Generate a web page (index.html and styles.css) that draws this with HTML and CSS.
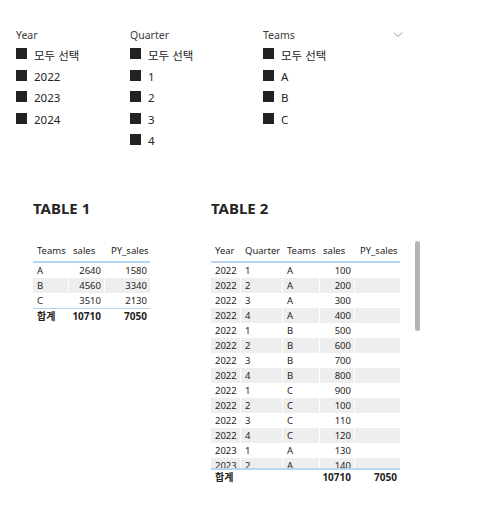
FILE: index.html
```html
<!DOCTYPE HTML>
<html lang="ko">
<head>
    <meta charset="UTF-8">
    <title>report</title>
    <link rel="stylesheet" href="styles.css">
</head>
<body>

<div class="slicers">
    <div class="slicer slicerYear">
        <div class="slicerHead">Year</div>
        <div class="slicerItem"><b></b>모두 선택</div>
        <div class="slicerItem"><b></b>2022</div>
        <div class="slicerItem"><b></b>2023</div>
        <div class="slicerItem"><b></b>2024</div>
    </div>
    <div class="slicer slicerQuarter">
        <div class="slicerHead">Quarter</div>
        <div class="slicerItem"><b></b>모두 선택</div>
        <div class="slicerItem"><b></b>1</div>
        <div class="slicerItem"><b></b>2</div>
        <div class="slicerItem"><b></b>3</div>
        <div class="slicerItem"><b></b>4</div>
    </div>
    <div class="slicer slicerTeams">
        <div class="slicerHead">Teams
            <svg class="chevron" width="10" height="7" viewBox="0 0 10 7"><polyline points="1,1.5 5,5.5 9,1.5" fill="none" stroke="#8a9bb0" stroke-width="1"/></svg>
        </div>
        <div class="slicerItem"><b></b>모두 선택</div>
        <div class="slicerItem"><b></b>A</div>
        <div class="slicerItem"><b></b>B</div>
        <div class="slicerItem"><b></b>C</div>
    </div>
</div>

<div class="visuals">
    <div class="visual visual1">
        <h2 class="visualTitle">TABLE 1</h2>
        <div class="grid grid1">
            <div class="gridRow gridHead"><span>Teams</span><span>sales</span><span class="pyHead">PY_sales</span></div>
            <div class="gridRow"><span>A</span><span class="num">2640</span><span class="num">1580</span></div>
            <div class="gridRow alt"><span>B</span><span class="num">4560</span><span class="num">3340</span></div>
            <div class="gridRow"><span>C</span><span class="num">3510</span><span class="num">2130</span></div>
            <div class="gridRow gridTotal"><span>합계</span><span class="num">10710</span><span class="num">7050</span></div>
        </div>
    </div>

    <div class="visual visual2">
        <h2 class="visualTitle">TABLE 2</h2>
        <div class="grid grid2">
            <div class="gridRow gridHead"><span>Year</span><span>Quarter</span><span>Teams</span><span class="salesHead">sales</span><span class="pyHead">PY_sales</span></div>
            <div class="gridBody" id="rows2"></div>
            <div class="gridRow gridTotal"><span>합계</span><span></span><span></span><span class="num">10710</span><span class="num">7050</span></div>
            <div class="scrollThumb"></div>
        </div>
    </div>
</div>

<script type="text/javascript">
    var data = [
        [2022, 1, "A", 100], [2022, 2, "A", 200], [2022, 3, "A", 300], [2022, 4, "A", 400],
        [2022, 1, "B", 500], [2022, 2, "B", 600], [2022, 3, "B", 700], [2022, 4, "B", 800],
        [2022, 1, "C", 900], [2022, 2, "C", 100], [2022, 3, "C", 110], [2022, 4, "C", 120],
        [2023, 1, "A", 130], [2023, 2, "A", 140], [2023, 3, "A", 150]
    ];
    var body = document.getElementById("rows2");
    var html = "";
    for(var i = 0, len = data.length; i < len; i++) {
        var r = data[i];
        html += '<div class="gridRow' + (i % 2 ? ' alt' : '') + '"><span>' + r[0] + '</span><span>' + r[1] +
            '</span><span>' + r[2] + '</span><span class="num">' + r[3] + '</span><span></span></div>';
    }
    body.innerHTML = html;
</script>
</body>
</html>
```

FILE: styles.css
```css
body {
    margin: 0;
    background: #fff;
    color: #252423;
    font-family: "Noto Sans", "Noto Sans CJK KR", sans-serif;
}
.slicers {
    display: flex;
    padding: 28px 0 0 16px;
}
.slicerYear { width: 114px; }
.slicerQuarter { width: 133px; }
.slicerTeams { width: 142px; }
.slicerHead {
    position: relative;
    height: 14px;
    line-height: 14px;
    font-size: 10.5px;
    color: #3b3a39;
    margin-bottom: 2px;
}
.chevron {
    position: absolute;
    right: 2px;
    top: 3px;
}
.slicerItem {
    display: flex;
    align-items: center;
    height: 21.5px;
    font-size: 11.5px;
    color: #252423;
}
.slicerItem b {
    display: inline-block;
    width: 11px;
    height: 11px;
    margin-right: 7px;
    background-color: #222;
    position: relative;
    top: -1px;
}
.visuals {
    display: flex;
    padding-top: 46px;
}
.visual1 {
    margin-left: 33px;
    width: 117px;
}
.visual2 {
    margin-left: 61px;
    width: 189px;
}
.visualTitle {
    margin: 0;
    height: 20px;
    line-height: 20px;
    font-size: 15px;
    font-weight: bold;
    color: #252423;
}
.grid {
    position: relative;
    margin-top: 23px;
    font-size: 9.5px;
    color: #252423;
}
.gridRow {
    display: grid;
    height: 15px;
    line-height: 15px;
    white-space: nowrap;
}
.grid1 .gridRow { grid-template-columns: 36px 36px 45px; }
.grid2 .gridRow { grid-template-columns: 30px 42px 37px 35px 45px; }
.gridRow span {
    padding-left: 4px;
    border-right: 1px solid #fff;
    overflow: hidden;
}
.gridRow span:last-child {
    border-right: 0;
}
.gridRow span.num {
    text-align: right;
    padding: 0 3px 0 0;
}
.gridRow.alt span {
    background: #eeeeee;
}
.gridHead {
    height: 20px;
    line-height: 20px;
    border-bottom: 2px solid #b8d6f2;
}
.grid1 .pyHead { padding-left: 6px; }
.grid2 .salesHead { padding-left: 3px; }
.grid2 .pyHead { padding-left: 5px; }
.gridTotal {
    height: 14px;
    line-height: 14px;
    font-size: 10px;
    font-weight: bold;
    border-top: 2px solid #b8d6f2;
}
.grid1 .gridTotal {
    border-top-width: 1.5px;
}
.gridBody {
    height: 205px;
    overflow: hidden;
}
.scrollThumb {
    position: absolute;
    left: 204px;
    top: 0;
    width: 5px;
    height: 90px;
    border-radius: 3px;
    background: #b3b3b3;
}
```
